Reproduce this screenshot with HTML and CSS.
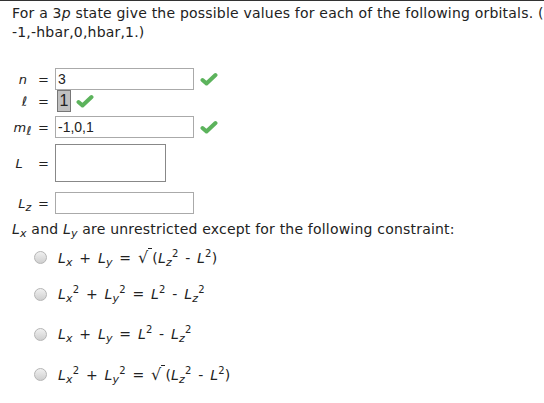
FILE: index.html
```html
<!DOCTYPE html>
<html lang="en">
<head>
  <meta charset="UTF-8" />
  <title>3p state orbitals</title>
  <link rel="stylesheet" href="styles.css">
</head>
<body>
  <div class="question">
    <p class="prompt">For a 3<i>p</i> state give the possible values for each of the following orbitals. (<br>-1,-hbar,0,hbar,1.)</p>

    <div class="answers">
      <div class="row row-n">
        <span class="label"><i>n</i>&nbsp;&nbsp;=</span>
        <input type="text" class="field" value="3">
        <svg class="check" width="18" height="15" viewBox="0 0 18 15"><path d="M2.5 8 L6.5 11.5 L15.5 3" /></svg>
      </div>
      <div class="row row-l">
        <span class="label"><i>&#8467;</i>&nbsp;&nbsp;=</span>
        <span class="picked">1</span>
        <svg class="check" width="18" height="15" viewBox="0 0 18 15"><path d="M2.5 8 L6.5 11.5 L15.5 3" /></svg>
      </div>
      <div class="row row-ml">
        <span class="label"><i>m<sub class="ell">&#8467;</sub></i>&nbsp;=</span>
        <input type="text" class="field" value="-1,0,1">
        <svg class="check" width="18" height="15" viewBox="0 0 18 15"><path d="M2.5 8 L6.5 11.5 L15.5 3" /></svg>
      </div>
      <div class="row row-big">
        <span class="label"><i>L</i>&nbsp;&nbsp;&nbsp;=</span>
        <textarea class="box"></textarea>
      </div>
      <div class="row row-lz">
        <span class="label"><i>L<sub>z</sub></i>&nbsp;=</span>
        <input type="text" class="field" value="">
      </div>
    </div>

    <p class="constraint"><i>L<sub>x</sub></i> and <i>L<sub>y</sub></i> are unrestricted except for the following constraint:</p>

    <ul class="choices">
      <li><input type="radio" name="c" class="radio"><span class="math"><i>L<sub>x</sub></i> + <i>L<sub>y</sub></i> = <span class="root">&#8730;</span><span class="bar"></span>(<i>L<sub>z</sub></i><sup>2</sup> - <i>L</i><sup>2</sup>)</span></li>
      <li><input type="radio" name="c" class="radio"><span class="math"><i>L<sub>x</sub></i><sup>2</sup> + <i>L<sub>y</sub></i><sup>2</sup> = <i>L</i><sup>2</sup> - <i>L<sub>z</sub></i><sup>2</sup></span></li>
      <li><input type="radio" name="c" class="radio"><span class="math"><i>L<sub>x</sub></i> + <i>L<sub>y</sub></i> = <i>L</i><sup>2</sup> - <i>L<sub>z</sub></i><sup>2</sup></span></li>
      <li><input type="radio" name="c" class="radio"><span class="math"><i>L<sub>x</sub></i><sup>2</sup> + <i>L<sub>y</sub></i><sup>2</sup> = <span class="root">&#8730;</span><span class="bar"></span>(<i>L<sub>z</sub></i><sup>2</sup> - <i>L</i><sup>2</sup>)</span></li>
    </ul>
  </div>
</body>
</html>
```

FILE: styles.css
```css
body {
    margin: 0;
    padding: 0;
    background-color: #fff;
    color: #222;
    font-family: "DejaVu Sans", Verdana, sans-serif;
    font-size: 14px;
    letter-spacing: 0.2px;
    overflow: hidden;
}

/* 上端の細い線 */
.question {
    border-top: 1px solid #333;
    width: 560px;
    padding: 0 0 0 12px;
}

.prompt {
    margin: 3px 0 0 0;
    line-height: 19px;
    white-space: nowrap;
}

.answers {
    margin-top: 26px;
}

.row {
    display: flex;
    align-items: center;
}

.label {
    width: 37px;
    text-align: right;
    margin-right: 6px;
    font-size: 13px;
    white-space: nowrap;
}

.label i {
    margin-right: 2px;
}

.label .ell {
    font-size: 12px;
}

.field {
    width: 139px;
    height: 22px;
    box-sizing: border-box;
    border: 1px solid #aaa;
    padding: 0 2px;
    margin: 0;
    font-family: "Liberation Sans", Arial, sans-serif;
    font-size: 14px;
    color: #222;
}

.check {
    margin-left: 6px;
}

.check path {
    fill: none;
    stroke: #5cb35c;
    stroke-width: 4;
    stroke-linecap: round;
    stroke-linejoin: round;
}

.picked {
    display: inline-block;
    height: 22px;
    width: 14px;
    box-sizing: border-box;
    margin-left: 2px;
    background-color: #c0c0c0;
    border: 1px solid #777;
    font-family: "Liberation Sans", Arial, sans-serif;
    font-size: 16px;
    line-height: 20px;
    text-align: center;
}

.row-l .check {
    margin-left: 5px;
}

.row-ml {
    margin-top: 4px;
}

.row-big {
    margin-top: 6px;
}

.box {
    width: 111px;
    height: 38px;
    box-sizing: border-box;
    border: 1px solid #888;
    margin: 0;
    resize: none;
}

.row-lz {
    margin-top: 10px;
}

.constraint {
    margin: 6px 0 0 0;
    line-height: 19px;
}

sub {
    font-size: 11px;
    vertical-align: -3px;
    line-height: 0;
}

sup {
    font-size: 10px;
    vertical-align: 6px;
    line-height: 0;
}

.choices {
    list-style: none;
    margin: 0;
    padding: 0;
}

.choices li {
    display: flex;
    align-items: center;
    height: 40px;
    padding-left: 22px;
}

.choices li:first-child {
    height: 33px;
    margin-top: 2px;
}

.radio {
    appearance: none;
    -webkit-appearance: none;
    width: 13px;
    height: 13px;
    margin: 0 11px 0 0;
    border: 1px solid #b5b5b5;
    border-radius: 50%;
    background: linear-gradient(#f0f0f0, #cfcfcf);
}

.math {
    white-space: nowrap;
    word-spacing: 2px;
}

.root {
    font-size: 16px;
}

.bar {
    display: inline-block;
    width: 4px;
    height: 12px;
    border-top: 1px solid #222;
    vertical-align: 2px;
}
```
